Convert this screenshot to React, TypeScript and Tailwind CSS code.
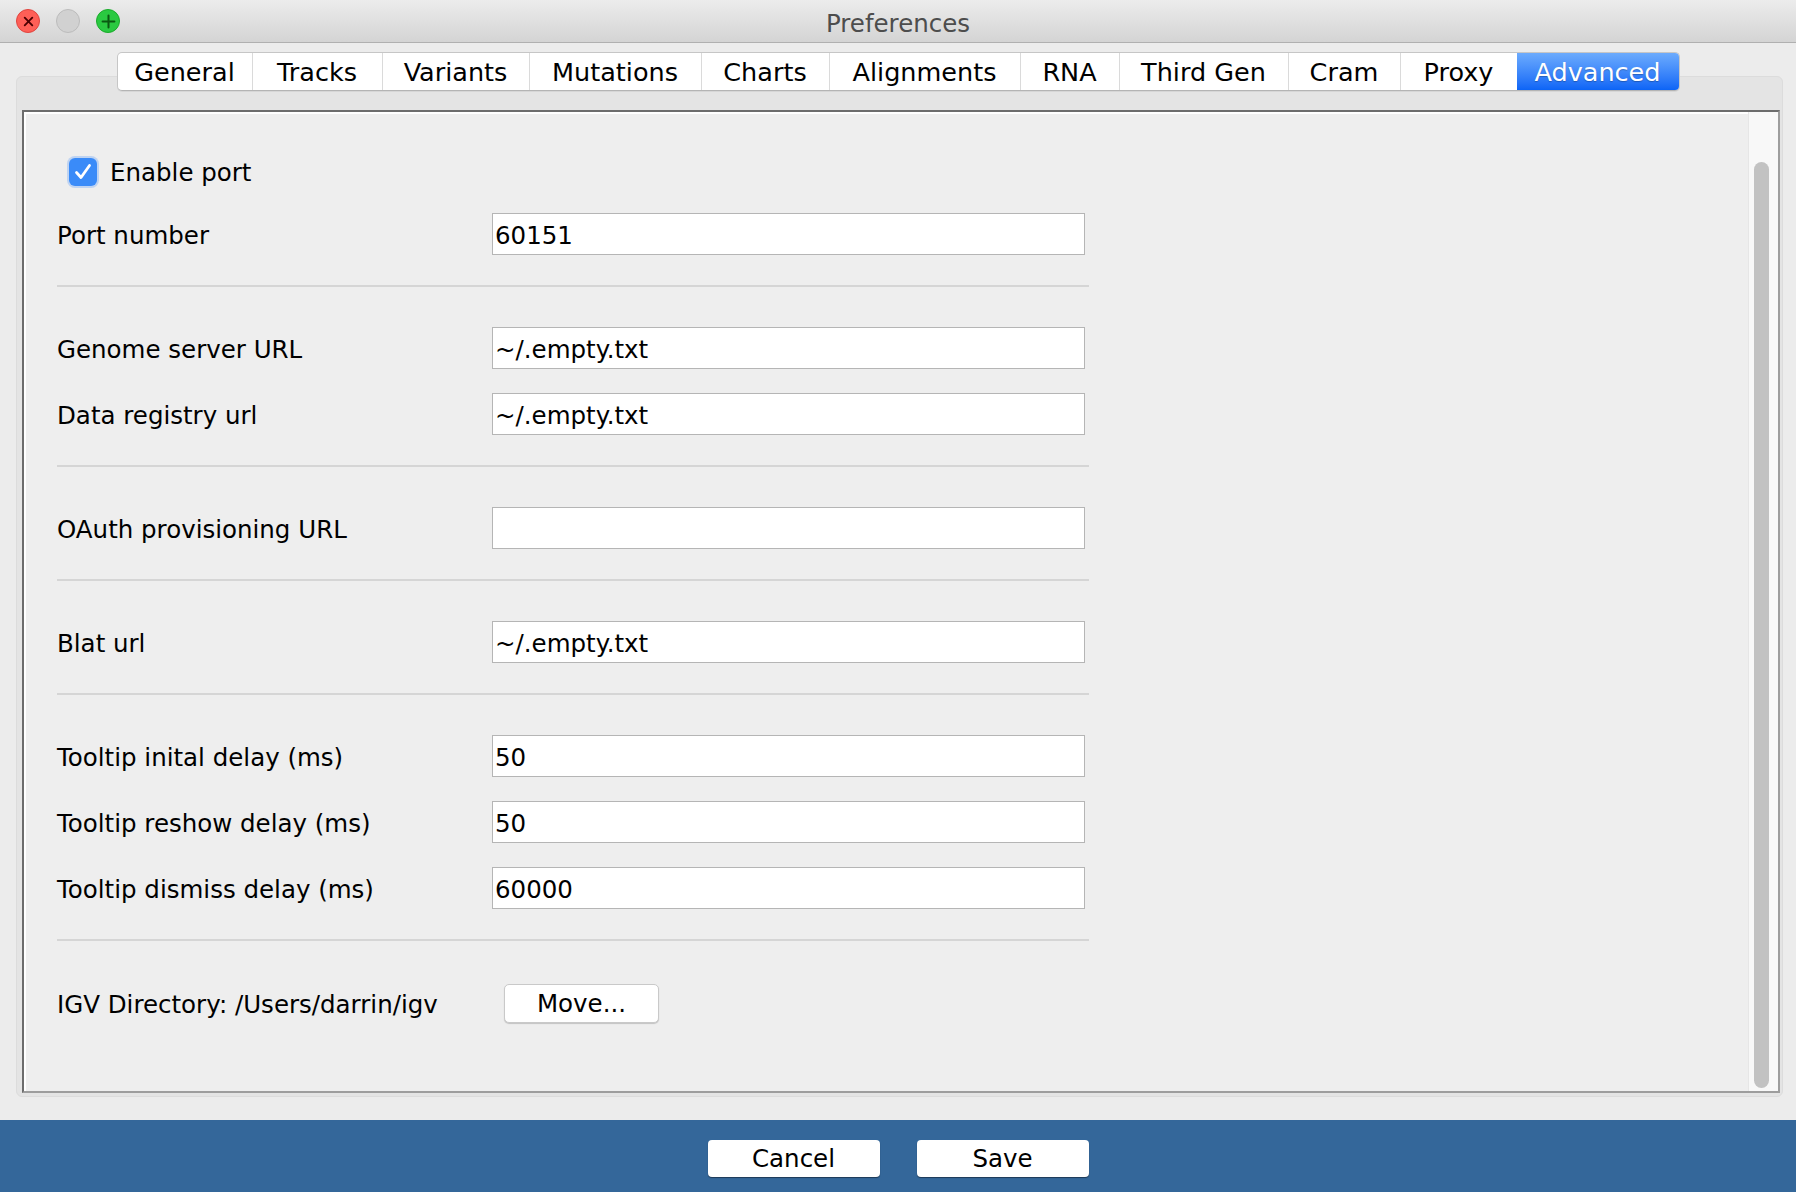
import React from "react";

const TABS = [
  { name: "General", w: 134 },
  { name: "Tracks", w: 130 },
  { name: "Variants", w: 147 },
  { name: "Mutations", w: 172 },
  { name: "Charts", w: 128 },
  { name: "Alignments", w: 191 },
  { name: "RNA", w: 99 },
  { name: "Third Gen", w: 169 },
  { name: "Cram", w: 112 },
  { name: "Proxy", w: 117 },
  { name: "Advanced", w: 162 },
];

function TrafficLights() {
  return (
    <div className="flex items-center gap-[16px] pl-[16px]">
      <div className="w-[24px] h-[24px] rounded-full bg-[#fe5f57] border border-[#e0443e] flex items-center justify-center">
        <svg width="13" height="13" viewBox="0 0 12 12">
          <path d="M2.5 2.5 L9.5 9.5 M9.5 2.5 L2.5 9.5" stroke="#4c0002" strokeWidth="1.7" strokeLinecap="round" />
        </svg>
      </div>
      <div className="w-[24px] h-[24px] rounded-full bg-[#d1d1d1] border border-[#bcbcbc]" />
      <div className="w-[24px] h-[24px] rounded-full bg-[#2ac941] border border-[#1aab2b] flex items-center justify-center">
        <svg width="15" height="15" viewBox="0 0 14 14">
          <path d="M7 1.5 V12.5 M1.5 7 H12.5" stroke="#0a5a12" strokeWidth="1.9" strokeLinecap="round" />
        </svg>
      </div>
    </div>
  );
}

function Field({ label, value }: { label: string; value: string }) {
  return (
    <div className="flex items-center h-[42px]">
      <div className="w-[435px] shrink-0 pt-[4px] text-black">{label}</div>
      <div className="w-[593px] h-[42px] bg-white border border-[#b5b5b5] flex items-center pl-[2px] pt-[4px] text-black">
        {value}
      </div>
    </div>
  );
}

function Separator() {
  return <div className="w-[1032px] h-[2px] bg-[#d5d5d5] mt-[30px] mb-[40px]" />;
}

export default function App() {
  return (
    <div
      className="w-[1796px] h-[1192px] flex flex-col bg-[#ececec] text-[24.5px] leading-none overflow-hidden"
      style={{ fontFamily: '"DejaVu Sans", "Liberation Sans", sans-serif' }}
    >
      {/* Title bar */}
      <div className="h-[43px] shrink-0 grid grid-cols-[1fr_auto_1fr] items-center bg-gradient-to-b from-[#ececec] to-[#d4d4d4] border-b border-[#b0b0b0]">
        <TrafficLights />
        <div className="text-[#4d4d4d] pt-[6px]">Preferences</div>
        <div />
      </div>

      {/* Body */}
      <div className="flex-1 flex flex-col pt-[9px] pb-[23px]">
        {/* Tabs */}
        <div className="relative z-10 flex justify-center h-[39px] shrink-0 text-[25.5px]">
          <div className="flex rounded-[5px] border border-[#c6c6c6] border-b-[#b4b4b4] overflow-hidden bg-white shadow-[0_1px_0_rgba(0,0,0,0.06)]">
            {TABS.map((t, i) =>
              t.name === "Advanced" ? (
                <div
                  key={t.name}
                  className="h-full flex items-center justify-center pt-[3px] bg-gradient-to-b from-[#6cabfd] to-[#0b64f6] text-white [text-shadow:0_1px_1px_rgba(0,0,0,0.25)]"
                  style={{ width: t.w }}
                >
                  {t.name}
                </div>
              ) : (
                <div
                  key={t.name}
                  className={`h-full flex items-center justify-center pt-[3px] text-black ${i > 0 ? "border-l border-[#dadada]" : ""}`}
                  style={{ width: t.w }}
                >
                  {t.name}
                </div>
              )
            )}
          </div>
        </div>

        {/* Tab pane */}
        <div className="-mt-[15px] ml-[16px] mr-[13px] flex-1 flex flex-col rounded-[6px] bg-[#e4e4e4] border border-[#dcdcdc] pt-[33px] pl-[5px] pr-[2px] pb-[3px]">
          <div className="flex-1 flex border-t-2 border-l-2 border-[#6c6c6c] border-r-2 border-b-2 border-r-[#9d9d9d] border-b-[#9d9d9d] bg-[#eeeeee] shadow-[inset_2px_2px_0_#ffffff]">
            {/* Content */}
            <div className="flex-1 flex flex-col pl-[33px] pt-[45px]">
              <div className="flex items-center h-[29px] pl-[12px]">
                <div className="w-[28px] h-[28px] rounded-[6px] bg-[#3a8bf8] shadow-[0_0_0_2px_rgba(100,160,250,0.35)] flex items-center justify-center">
                  <svg width="28" height="28" viewBox="0 0 28 28">
                    <path d="M7.5 14.5 L12 19.5 L20.5 7.5" stroke="#ffffff" strokeWidth="2.8" fill="none" strokeLinecap="round" strokeLinejoin="round" />
                  </svg>
                </div>
                <span className="ml-[13px] pt-[4px] text-black">Enable port</span>
              </div>
              <div className="mt-[27px]">
                <Field label="Port number" value="60151" />
              </div>

              <Separator />

              <div className="flex flex-col gap-[24px]">
                <Field label="Genome server URL" value="~/.empty.txt" />
                <Field label="Data registry url" value="~/.empty.txt" />
              </div>

              <Separator />

              <Field label="OAuth provisioning URL" value="" />

              <Separator />

              <Field label="Blat url" value="~/.empty.txt" />

              <Separator />

              <div className="flex flex-col gap-[24px]">
                <Field label="Tooltip inital delay (ms)" value="50" />
                <Field label="Tooltip reshow delay (ms)" value="50" />
                <Field label="Tooltip dismiss delay (ms)" value="60000" />
              </div>

              <Separator />

              <div className="flex items-center h-[40px] mt-[2px]">
                <div className="w-[447px] shrink-0 pt-[4px] text-black">IGV Directory: /Users/darrin/igv</div>
                <button className="w-[155px] h-[39px] rounded-[5px] bg-white border border-[#c9c9c9] shadow-[0_1px_1px_rgba(0,0,0,0.18)] pt-[3px] text-black">
                  Move...
                </button>
              </div>
            </div>

            {/* Scrollbar */}
            <div className="w-[30px] flex flex-col bg-[#f8f8f8] border-l border-[#e6e6e6] pl-[5px] pr-[9px] pt-[50px] pb-[3px]">
              <div className="flex-1 rounded-full bg-[#c2c2c2]" />
            </div>
          </div>
        </div>
      </div>

      {/* Footer */}
      <div className="h-[72px] shrink-0 bg-[#34679a] flex justify-center pt-[20px] gap-[37px]">
        <button className="w-[172px] h-[37px] rounded-[4px] bg-white shadow-[0_1px_1px_rgba(0,0,0,0.45)] pt-[2px] text-black">
          Cancel
        </button>
        <button className="w-[172px] h-[37px] rounded-[4px] bg-white shadow-[0_1px_1px_rgba(0,0,0,0.45)] pt-[2px] text-black">
          Save
        </button>
      </div>
    </div>
  );
}
